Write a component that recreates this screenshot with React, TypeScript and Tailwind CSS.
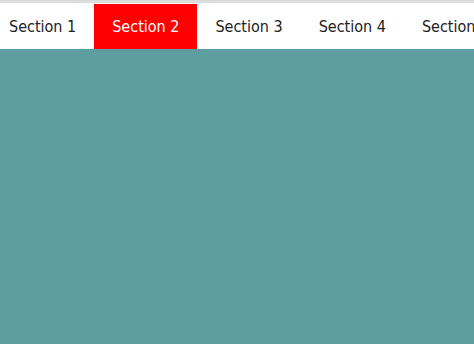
import { useState } from "react";

const sections = ["Section 1", "Section 2", "Section 3", "Section 4", "Section 5"];

export default function App() {
  const [active, setActive] = useState(1);

  return (
    <div className="flex h-[344px] w-[474px] flex-col overflow-hidden bg-[#5f9ea0] font-['DejaVu_Sans_Condensed','DejaVu_Sans',Verdana,sans-serif]">
      <div className="h-[3px] bg-[#dcdcdc]" />
      <div className="overflow-hidden bg-white pt-px">
        <div className="-ml-[9px] flex whitespace-nowrap">
          {sections.map((s, i) => (
            <button
              key={s}
              onClick={() => setActive(i)}
              className={
                i === active
                  ? "h-[45px] shrink-0 bg-[#ff0000] px-[18px] text-[16px] text-white"
                  : "h-[45px] shrink-0 bg-white px-[18px] text-[16px] text-[#222]"
              }
            >
              {s}
            </button>
          ))}
        </div>
      </div>
      <div className="flex-1" />
    </div>
  );
}
